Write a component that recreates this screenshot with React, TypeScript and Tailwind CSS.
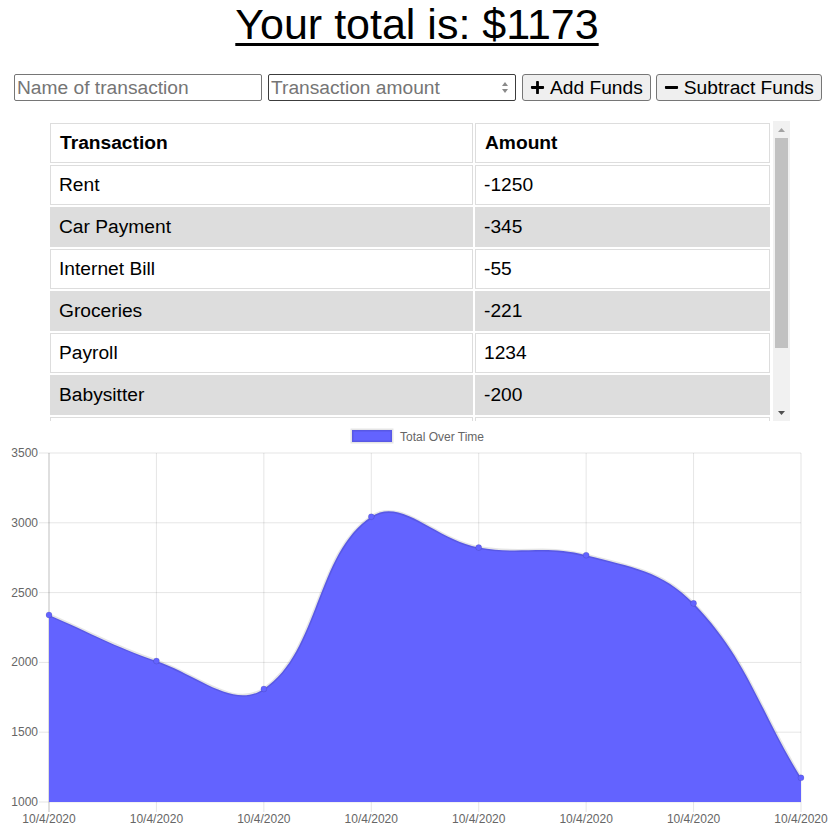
import React from "react";
import { FaPlus, FaMinus } from "react-icons/fa";

const rows: [string, string][] = [
  ["Rent", "-1250"],
  ["Car Payment", "-345"],
  ["Internet Bill", "-55"],
  ["Groceries", "-221"],
  ["Payroll", "1234"],
  ["Babysitter", "-200"],
  ["Gas", "-330"],
  ["Deposit", "2000"],
];

const data = [2340, 2010, 1810, 3044, 2823, 2768, 2423, 1173];
const X0 = 49;
const X1 = 801;
const YT = 453;
const YB = 802;
const OY = 421;

type P = { x: number; y: number };

function buildChart() {
  const pts: P[] = data.map((v, i) => ({
    x: X0 + (i * (X1 - X0)) / 7,
    y: YB - ((v - 1000) * (YB - YT)) / 2500 - OY,
  }));
  const t = 0.4;
  const clamp = (p: P): P => ({
    x: Math.min(Math.max(p.x, X0), X1),
    y: Math.min(Math.max(p.y, YT - OY), YB - OY),
  });
  const cps = pts.map((cur, i) => {
    const prev = i === 0 ? cur : pts[i - 1];
    const next = i === pts.length - 1 ? cur : pts[i + 1];
    const d01 = Math.hypot(cur.x - prev.x, cur.y - prev.y);
    const d12 = Math.hypot(next.x - cur.x, next.y - cur.y);
    let s01 = d01 / (d01 + d12);
    let s12 = d12 / (d01 + d12);
    if (isNaN(s01)) s01 = 0;
    if (isNaN(s12)) s12 = 0;
    const fa = t * s01;
    const fb = t * s12;
    return {
      prev: clamp({ x: cur.x - fa * (next.x - prev.x), y: cur.y - fa * (next.y - prev.y) }),
      next: clamp({ x: cur.x + fb * (next.x - prev.x), y: cur.y + fb * (next.y - prev.y) }),
    };
  });
  let d = `M ${pts[0].x} ${pts[0].y}`;
  for (let i = 1; i < pts.length; i++) {
    const a = cps[i - 1].next;
    const b = cps[i].prev;
    d += ` C ${a.x} ${a.y} ${b.x} ${b.y} ${pts[i].x} ${pts[i].y}`;
  }
  const fill = `${d} L ${pts[pts.length - 1].x} ${YB - OY} L ${pts[0].x} ${YB - OY} Z`;
  return { pts, d, fill };
}

function Chart() {
  const { pts, d, fill } = buildChart();
  const yTicks = [3500, 3000, 2500, 2000, 1500, 1000];
  const blue = "#6363ff";
  return (
    <svg width={834} height={413} viewBox="0 0 834 413" className="block">
      <g fontFamily="'Liberation Sans', Arial, sans-serif" fontSize={12} fill="#666">
        <rect x={352} y={430 - OY} width={40} height={12} fill={blue} stroke="rgba(0,0,0,0.1)" strokeWidth={3} />
        <text x={400} y={440.5 - OY}>Total Over Time</text>
        {yTicks.map((v) => {
          const y = YB - ((v - 1000) * (YB - YT)) / 2500 - OY;
          return (
            <g key={v}>
              <line x1={39} x2={X1} y1={y} y2={y} stroke="rgba(0,0,0,0.1)" strokeWidth={1} />
              <text x={38} y={y + 4} textAnchor="end">
                {v}
              </text>
            </g>
          );
        })}
        {pts.map((p, i) => (
          <g key={i}>
            <line
              x1={p.x}
              x2={p.x}
              y1={YT - OY}
              y2={812 - OY}
              stroke={i === 0 ? "rgba(0,0,0,0.25)" : "rgba(0,0,0,0.1)"}
              strokeWidth={1}
            />
            <text x={p.x} y={823 - OY} textAnchor="middle">
              10/4/2020
            </text>
          </g>
        ))}
      </g>
      <path d={fill} fill={blue} />
      <path d={d} fill="none" stroke="rgba(0,0,0,0.1)" strokeWidth={3} />
      {pts.map((p, i) => (
        <circle key={i} cx={p.x} cy={p.y} r={3} fill={blue} stroke="rgba(0,0,0,0.1)" strokeWidth={1} />
      ))}
    </svg>
  );
}

export default function App() {
  return (
    <div
      className="w-[834px] min-h-[834px] bg-white text-black"
      style={{ fontFamily: "'Liberation Sans', Arial, sans-serif" }}
    >
      <h1 className="m-0 h-[48px] text-center text-[43px] font-normal leading-[48px] underline decoration-[3px] underline-offset-[4px]">
        Your total is: $1173
      </h1>

      <div className="mt-[26px] flex items-center pl-[14px] text-[19.2px]">
        <input
          type="text"
          placeholder="Name of transaction"
          className="h-[27px] w-[248px] rounded-[2px] border border-[#767676] bg-white px-[2px] py-[1px] text-[19.2px] leading-[22px] placeholder:text-[#757575] outline-none"
        />
        <div className="ml-[6px] flex h-[27px] w-[248px] items-center rounded-[2px] border border-[#3c3c3c] bg-white">
          <input
            type="text"
            placeholder="Transaction amount"
            className="h-full min-w-0 flex-1 bg-transparent px-[2px] text-[19.2px] leading-[22px] placeholder:text-[#757575] outline-none"
          />
          <div className="mr-[3px] flex h-[21px] w-[15px] flex-col items-center justify-center gap-[3px]">
            <svg width="6" height="4" viewBox="0 0 6 4">
              <path d="M0 4 L3 0 L6 4 Z" fill="#8a8a8a" />
            </svg>
            <svg width="6" height="4" viewBox="0 0 6 4">
              <path d="M0 0 L6 0 L3 4 Z" fill="#8a8a8a" />
            </svg>
          </div>
        </div>
        <button className="ml-[6px] flex h-[27px] items-center rounded-[3px] border border-[#767676] bg-[#efefef] px-[7px] text-[19.2px] leading-[22px] text-black">
          <FaPlus className="h-[15px] w-[15px]" />
          <span className="ml-[5px]">Add Funds</span>
        </button>
        <button className="ml-[5px] flex h-[27px] items-center rounded-[3px] border border-[#767676] bg-[#efefef] px-[7px] text-[19.2px] leading-[22px] text-black">
          <FaMinus className="h-[15px] w-[15px]" />
          <span className="ml-[5px]">Subtract Funds</span>
        </button>
      </div>

      <div className="ml-[48px] mt-[20px] flex h-[300px] w-[742px]">
        <div className="h-[300px] w-[725px] overflow-hidden">
          <table className="w-[724px] table-fixed border-separate border-spacing-[2px] text-[19.2px] leading-[22px]">
            <colgroup>
              <col className="w-[423px]" />
              <col className="w-[295px]" />
            </colgroup>
            <thead>
              <tr>
                <th className="border border-[#dddddd] bg-white px-[9px] py-[8px] text-left font-bold">Transaction</th>
                <th className="border border-[#dddddd] bg-white px-[9px] py-[8px] text-left font-bold">Amount</th>
              </tr>
            </thead>
            <tbody>
              {rows.map(([name, amt], i) => (
                <tr key={name}>
                  <td
                    className={`border border-[#dddddd] px-[8px] py-[8px] ${i % 2 === 1 ? "bg-[#dddddd]" : "bg-white"}`}
                  >
                    {name}
                  </td>
                  <td
                    className={`border border-[#dddddd] px-[8px] py-[8px] ${i % 2 === 1 ? "bg-[#dddddd]" : "bg-white"}`}
                  >
                    {amt}
                  </td>
                </tr>
              ))}
            </tbody>
          </table>
        </div>
        <div className="flex h-[300px] w-[17px] flex-col bg-[#f1f1f1]">
          <div className="flex h-[17px] items-center justify-center">
            <svg width="7" height="4" viewBox="0 0 7 4">
              <path d="M0 4 L3.5 0 L7 4 Z" fill="#a3a3a3" />
            </svg>
          </div>
          <div className="mx-[2px] h-[210px] bg-[#c1c1c1]" />
          <div className="flex-1" />
          <div className="flex h-[17px] items-center justify-center">
            <svg width="7" height="4" viewBox="0 0 7 4">
              <path d="M0 0 L7 0 L3.5 4 Z" fill="#505050" />
            </svg>
          </div>
        </div>
      </div>

      <Chart />
    </div>
  );
}
